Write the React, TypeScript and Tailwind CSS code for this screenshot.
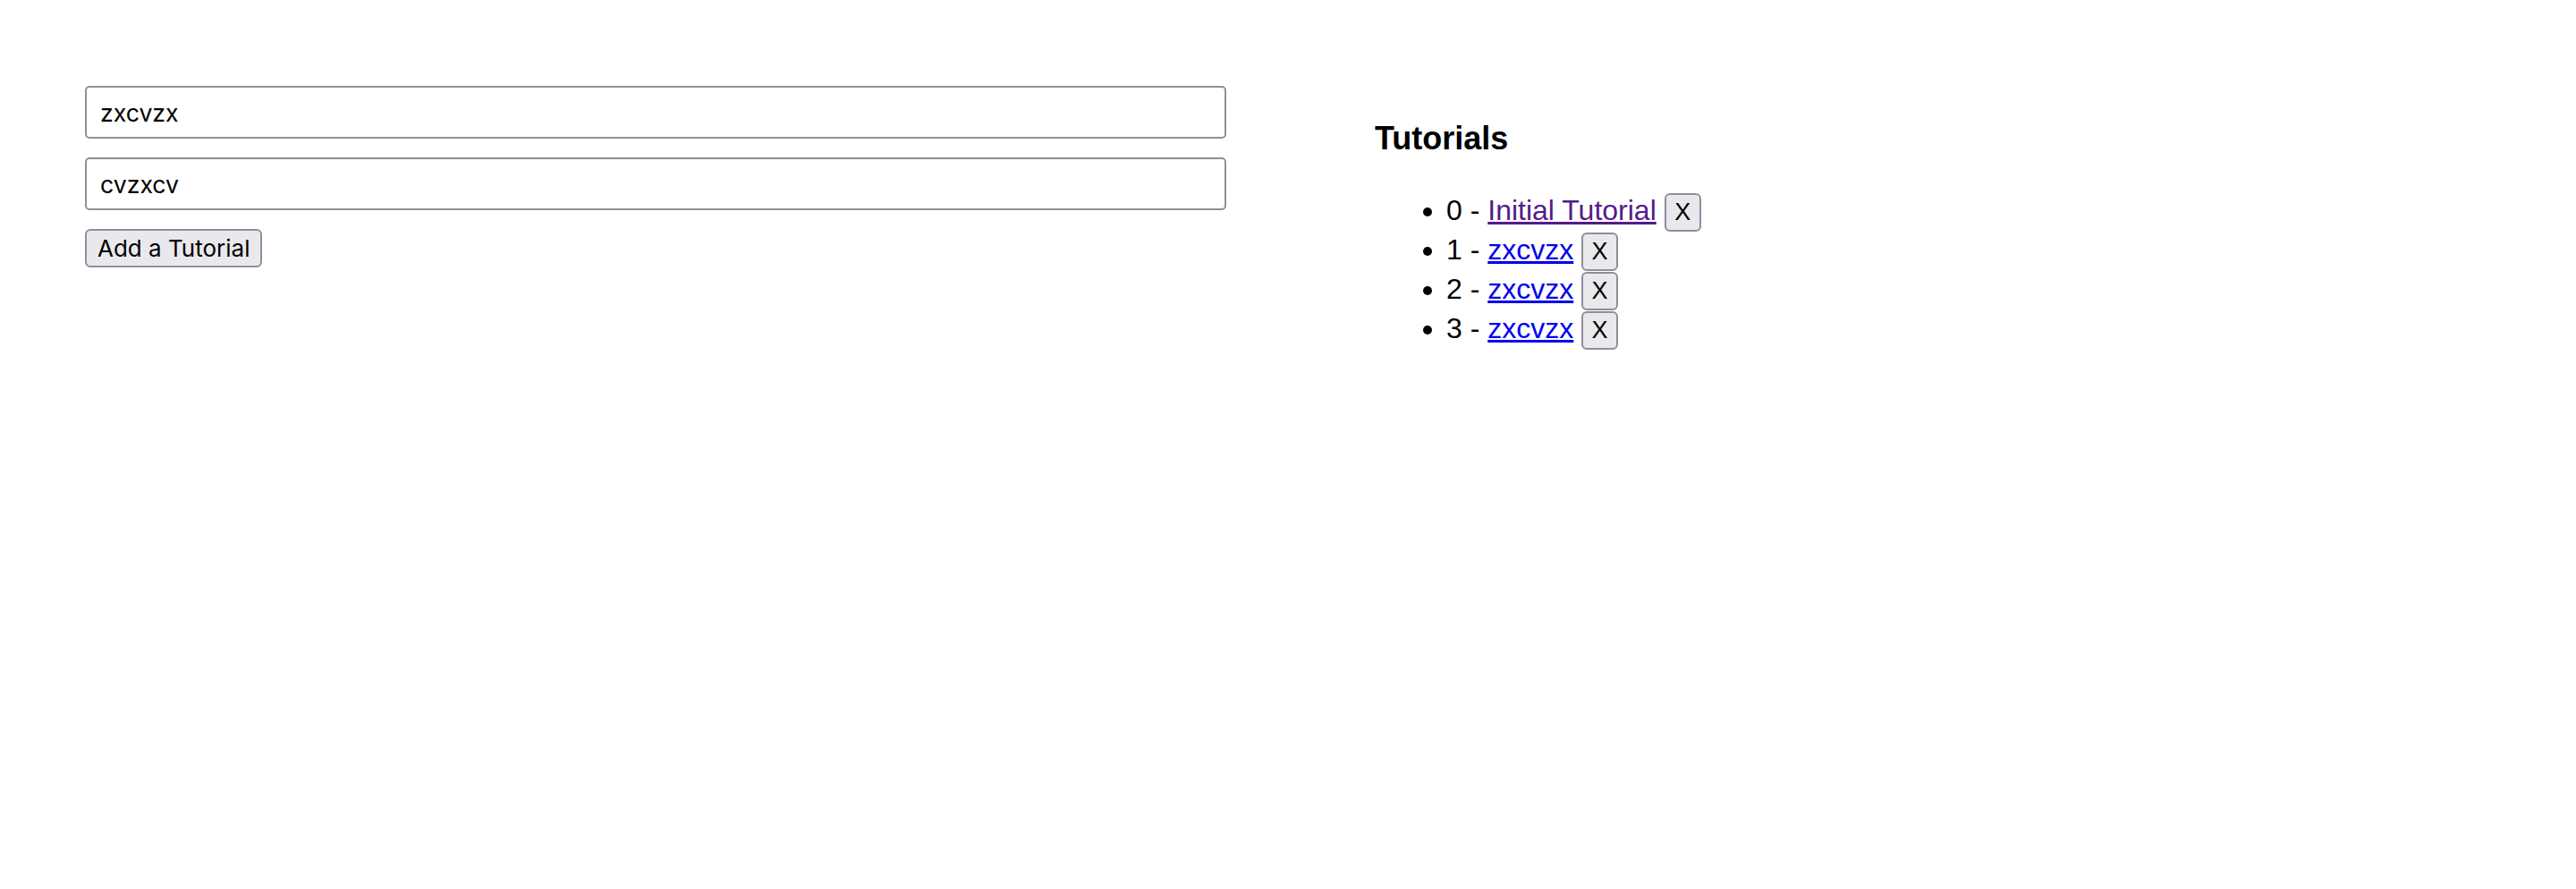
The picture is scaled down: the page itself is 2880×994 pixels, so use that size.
import { useState } from 'react';

type Tutorial = { id: number; title: string; visited: boolean };

const initialTutorials: Tutorial[] = [
  { id: 0, title: 'Initial Tutorial', visited: true },
  { id: 1, title: 'zxcvzx', visited: false },
  { id: 2, title: 'zxcvzx', visited: false },
  { id: 3, title: 'zxcvzx', visited: false },
];

export default function App() {
  const [title, setTitle] = useState('zxcvzx');
  const [description, setDescription] = useState('cvzxcv');
  const [tutorials, setTutorials] = useState(initialTutorials);

  const addTutorial = () => {
    setTutorials([...tutorials, { id: tutorials.length, title, visited: false }]);
  };

  const removeTutorial = (id: number) => {
    setTutorials(tutorials.filter((t) => t.id !== id));
  };

  return (
    <div className="min-h-screen bg-white flex items-start pl-[95px] pt-[96px] text-black font-['Liberation_Sans',Arial,sans-serif]">
      {/* Form */}
      <div className="w-[1276px] flex flex-col items-start gap-[21px]">
        <input
          value={title}
          onChange={(e) => setTitle(e.target.value)}
          className="w-full h-[59px] px-[15px] border-2 border-[#8f8e9b] rounded-[5px] bg-white text-[26.67px] font-['Inter',sans-serif] outline-none"
        />
        <input
          value={description}
          onChange={(e) => setDescription(e.target.value)}
          className="w-full h-[59px] px-[15px] border-2 border-[#8f8e9b] rounded-[5px] bg-white text-[26.67px] font-['Inter',sans-serif] outline-none"
        />
        <button
          onClick={addTutorial}
          className="h-[43px] px-[12px] border-2 border-[#8f8e9b] rounded-[6px] bg-[#e9e9ed] text-[26px] leading-none font-['Inter',sans-serif]"
        >
          Add a Tutorial
        </button>
      </div>

      {/* List */}
      <div className="ml-[166px] pt-[41px]">
        <h3 className="text-[36px] font-bold leading-none">Tutorials</h3>
        <ul className="list-disc pl-[80px] mt-[40px] text-[32px]">
          {tutorials.map((t) => (
            <li key={t.id} className="h-[44px] leading-[44px]">
              {t.id} -{' '}
              <a
                href="#"
                className={`underline ${t.visited ? 'text-[#551a8b]' : 'text-[#0000ee]'}`}
              >
                {t.title}
              </a>{' '}
              <button
                onClick={() => removeTutorial(t.id)}
                className="inline-flex items-center justify-center w-[41px] h-[43px] border-2 border-[#8f8e9b] rounded-[6px] bg-[#e9e9ed] text-[27px] leading-none font-['Liberation_Sans',Arial,sans-serif]"
              >
                X
              </button>
            </li>
          ))}
        </ul>
      </div>
    </div>
  );
}
